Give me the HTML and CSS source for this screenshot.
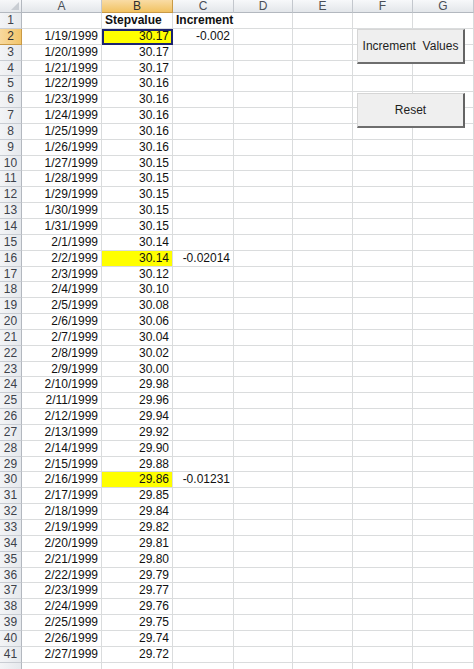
FILE: index.html
```html
<!DOCTYPE html>
<html>
<head>
<meta charset="utf-8">
<link rel="stylesheet" href="styles.css">
</head>
<body>
<div class="sheet">
  <div class="row head">
    <div class="corner"><svg width="8" height="8" viewBox="0 0 8 8"><polygon points="8,0 8,8 0,8" fill="#c9cdd3"/></svg></div>
    <div class="ch">A</div><div class="ch selh">B</div><div class="ch">C</div><div class="ch">D</div><div class="ch">E</div><div class="ch">F</div><div class="ch">G</div>
  </div>
  <div class="row"><div class="rh">1</div><div class="c"></div><div class="c bold">Stepvalue</div><div class="c bold over">Increment</div><div class="c"></div><div class="c"></div><div class="c"></div><div class="c"></div></div>
  <div class="row"><div class="rh selh">2</div><div class="c n">1/19/1999</div><div class="c n yel sel">30.17</div><div class="c n">-0.002</div><div class="c"></div><div class="c"></div><div class="c"></div><div class="c"></div></div>
  <div class="row"><div class="rh">3</div><div class="c n">1/20/1999</div><div class="c n">30.17</div><div class="c"></div><div class="c"></div><div class="c"></div><div class="c"></div><div class="c"></div></div>
  <div class="row"><div class="rh">4</div><div class="c n">1/21/1999</div><div class="c n">30.17</div><div class="c"></div><div class="c"></div><div class="c"></div><div class="c"></div><div class="c"></div></div>
  <div class="row"><div class="rh">5</div><div class="c n">1/22/1999</div><div class="c n">30.16</div><div class="c"></div><div class="c"></div><div class="c"></div><div class="c"></div><div class="c"></div></div>
  <div class="row"><div class="rh">6</div><div class="c n">1/23/1999</div><div class="c n">30.16</div><div class="c"></div><div class="c"></div><div class="c"></div><div class="c"></div><div class="c"></div></div>
  <div class="row"><div class="rh">7</div><div class="c n">1/24/1999</div><div class="c n">30.16</div><div class="c"></div><div class="c"></div><div class="c"></div><div class="c"></div><div class="c"></div></div>
  <div class="row"><div class="rh">8</div><div class="c n">1/25/1999</div><div class="c n">30.16</div><div class="c"></div><div class="c"></div><div class="c"></div><div class="c"></div><div class="c"></div></div>
  <div class="row"><div class="rh">9</div><div class="c n">1/26/1999</div><div class="c n">30.16</div><div class="c"></div><div class="c"></div><div class="c"></div><div class="c"></div><div class="c"></div></div>
  <div class="row"><div class="rh">10</div><div class="c n">1/27/1999</div><div class="c n">30.15</div><div class="c"></div><div class="c"></div><div class="c"></div><div class="c"></div><div class="c"></div></div>
  <div class="row"><div class="rh">11</div><div class="c n">1/28/1999</div><div class="c n">30.15</div><div class="c"></div><div class="c"></div><div class="c"></div><div class="c"></div><div class="c"></div></div>
  <div class="row"><div class="rh">12</div><div class="c n">1/29/1999</div><div class="c n">30.15</div><div class="c"></div><div class="c"></div><div class="c"></div><div class="c"></div><div class="c"></div></div>
  <div class="row"><div class="rh">13</div><div class="c n">1/30/1999</div><div class="c n">30.15</div><div class="c"></div><div class="c"></div><div class="c"></div><div class="c"></div><div class="c"></div></div>
  <div class="row"><div class="rh">14</div><div class="c n">1/31/1999</div><div class="c n">30.15</div><div class="c"></div><div class="c"></div><div class="c"></div><div class="c"></div><div class="c"></div></div>
  <div class="row"><div class="rh">15</div><div class="c n">2/1/1999</div><div class="c n">30.14</div><div class="c"></div><div class="c"></div><div class="c"></div><div class="c"></div><div class="c"></div></div>
  <div class="row"><div class="rh">16</div><div class="c n">2/2/1999</div><div class="c n yel">30.14</div><div class="c n">-0.02014</div><div class="c"></div><div class="c"></div><div class="c"></div><div class="c"></div></div>
  <div class="row"><div class="rh">17</div><div class="c n">2/3/1999</div><div class="c n">30.12</div><div class="c"></div><div class="c"></div><div class="c"></div><div class="c"></div><div class="c"></div></div>
  <div class="row"><div class="rh">18</div><div class="c n">2/4/1999</div><div class="c n">30.10</div><div class="c"></div><div class="c"></div><div class="c"></div><div class="c"></div><div class="c"></div></div>
  <div class="row"><div class="rh">19</div><div class="c n">2/5/1999</div><div class="c n">30.08</div><div class="c"></div><div class="c"></div><div class="c"></div><div class="c"></div><div class="c"></div></div>
  <div class="row"><div class="rh">20</div><div class="c n">2/6/1999</div><div class="c n">30.06</div><div class="c"></div><div class="c"></div><div class="c"></div><div class="c"></div><div class="c"></div></div>
  <div class="row"><div class="rh">21</div><div class="c n">2/7/1999</div><div class="c n">30.04</div><div class="c"></div><div class="c"></div><div class="c"></div><div class="c"></div><div class="c"></div></div>
  <div class="row"><div class="rh">22</div><div class="c n">2/8/1999</div><div class="c n">30.02</div><div class="c"></div><div class="c"></div><div class="c"></div><div class="c"></div><div class="c"></div></div>
  <div class="row"><div class="rh">23</div><div class="c n">2/9/1999</div><div class="c n">30.00</div><div class="c"></div><div class="c"></div><div class="c"></div><div class="c"></div><div class="c"></div></div>
  <div class="row"><div class="rh">24</div><div class="c n">2/10/1999</div><div class="c n">29.98</div><div class="c"></div><div class="c"></div><div class="c"></div><div class="c"></div><div class="c"></div></div>
  <div class="row"><div class="rh">25</div><div class="c n">2/11/1999</div><div class="c n">29.96</div><div class="c"></div><div class="c"></div><div class="c"></div><div class="c"></div><div class="c"></div></div>
  <div class="row"><div class="rh">26</div><div class="c n">2/12/1999</div><div class="c n">29.94</div><div class="c"></div><div class="c"></div><div class="c"></div><div class="c"></div><div class="c"></div></div>
  <div class="row"><div class="rh">27</div><div class="c n">2/13/1999</div><div class="c n">29.92</div><div class="c"></div><div class="c"></div><div class="c"></div><div class="c"></div><div class="c"></div></div>
  <div class="row"><div class="rh">28</div><div class="c n">2/14/1999</div><div class="c n">29.90</div><div class="c"></div><div class="c"></div><div class="c"></div><div class="c"></div><div class="c"></div></div>
  <div class="row"><div class="rh">29</div><div class="c n">2/15/1999</div><div class="c n">29.88</div><div class="c"></div><div class="c"></div><div class="c"></div><div class="c"></div><div class="c"></div></div>
  <div class="row"><div class="rh">30</div><div class="c n">2/16/1999</div><div class="c n yel">29.86</div><div class="c n">-0.01231</div><div class="c"></div><div class="c"></div><div class="c"></div><div class="c"></div></div>
  <div class="row"><div class="rh">31</div><div class="c n">2/17/1999</div><div class="c n">29.85</div><div class="c"></div><div class="c"></div><div class="c"></div><div class="c"></div><div class="c"></div></div>
  <div class="row"><div class="rh">32</div><div class="c n">2/18/1999</div><div class="c n">29.84</div><div class="c"></div><div class="c"></div><div class="c"></div><div class="c"></div><div class="c"></div></div>
  <div class="row"><div class="rh">33</div><div class="c n">2/19/1999</div><div class="c n">29.82</div><div class="c"></div><div class="c"></div><div class="c"></div><div class="c"></div><div class="c"></div></div>
  <div class="row"><div class="rh">34</div><div class="c n">2/20/1999</div><div class="c n">29.81</div><div class="c"></div><div class="c"></div><div class="c"></div><div class="c"></div><div class="c"></div></div>
  <div class="row"><div class="rh">35</div><div class="c n">2/21/1999</div><div class="c n">29.80</div><div class="c"></div><div class="c"></div><div class="c"></div><div class="c"></div><div class="c"></div></div>
  <div class="row"><div class="rh">36</div><div class="c n">2/22/1999</div><div class="c n">29.79</div><div class="c"></div><div class="c"></div><div class="c"></div><div class="c"></div><div class="c"></div></div>
  <div class="row"><div class="rh">37</div><div class="c n">2/23/1999</div><div class="c n">29.77</div><div class="c"></div><div class="c"></div><div class="c"></div><div class="c"></div><div class="c"></div></div>
  <div class="row"><div class="rh">38</div><div class="c n">2/24/1999</div><div class="c n">29.76</div><div class="c"></div><div class="c"></div><div class="c"></div><div class="c"></div><div class="c"></div></div>
  <div class="row"><div class="rh">39</div><div class="c n">2/25/1999</div><div class="c n">29.75</div><div class="c"></div><div class="c"></div><div class="c"></div><div class="c"></div><div class="c"></div></div>
  <div class="row"><div class="rh">40</div><div class="c n">2/26/1999</div><div class="c n">29.74</div><div class="c"></div><div class="c"></div><div class="c"></div><div class="c"></div><div class="c"></div></div>
  <div class="row"><div class="rh">41</div><div class="c n">2/27/1999</div><div class="c n">29.72</div><div class="c"></div><div class="c"></div><div class="c"></div><div class="c"></div><div class="c"></div></div>
  <div class="row"><div class="rh"></div><div class="c"></div><div class="c"></div><div class="c"></div><div class="c"></div><div class="c"></div><div class="c"></div><div class="c"></div></div>

  <div class="btn btn-inc">Increment&nbsp; Values</div>
  <div class="btn btn-reset">Reset</div>
</div>
</body>
</html>
```
FILE: styles.css
```css
html, body {
  margin: 0;
  padding: 0;
  background: #ffffff;
  overflow: hidden;
}
.sheet {
  position: relative;
  width: 474px;
  height: 669px;
  overflow: hidden;
  font-family: "Liberation Sans", Arial, sans-serif;
  font-size: 12px;
  color: #111;
}
.row {
  display: grid;
  grid-template-columns: 22px 80px 71px 61px 59px 60px 60px 61px;
  height: 15.85px;
}
.row.head {
  height: 13px;
}
.row > div {
  box-sizing: border-box;
  border-right: 1px solid #dadcdd;
  border-bottom: 1px solid #dadcdd;
  white-space: nowrap;
  line-height: 15px;
  overflow: hidden;
}
.corner {
  background: linear-gradient(#f6f7f9, #e4e7eb);
  display: flex;
  align-items: flex-end;
  justify-content: flex-end;
  padding: 0 2px 2px 0;
}
.row > .corner {
  border-right: 1px solid #b3b8bf;
  border-bottom: 1px solid #b3b8bf;
}
.corner svg {
  display: block;
}
.row > .ch {
  background: linear-gradient(#f7f8fa, #e3e6ea);
  border-right: 1px solid #c3c7cd;
  border-bottom: 1px solid #b3b8bf;
  text-align: center;
  color: #4a4f57;
  font-size: 12px;
  line-height: 12px;
}
.row > .rh {
  background: linear-gradient(90deg, #f3f4f6, #e6e9ed);
  border-right: 1px solid #b3b8bf;
  border-bottom: 1px solid #c9cdd3;
  text-align: center;
  color: #3d424a;
  font-size: 12px;
}
.row > .selh {
  background: linear-gradient(#f9dca5, #f1c262);
  border-right-color: #c99a46;
  border-bottom-color: #c99a46;
  color: #2f2f2f;
}
.row > .rh.selh {
  background: linear-gradient(90deg, #f8d99e, #f2c56a);
}
.c {
  padding: 0 3px;
}
.n {
  text-align: right;
}
.bold {
  font-weight: bold;
}
.row > .over {
  overflow: visible;
  border-right-color: transparent;
}
.yel {
  background: #ffff00;
}
.sel {
  outline: 2px solid #1c2470;
  outline-offset: -2px;
}
.btn {
  position: absolute;
  left: 357px;
  width: 108px;
  height: 35px;
  box-sizing: border-box;
  background: #efefef;
  border-top: 1px solid #d6d6d6;
  border-left: 1px solid #d6d6d6;
  border-right: 2px solid #646464;
  border-bottom: 2px solid #6e6e6e;
  display: flex;
  align-items: center;
  justify-content: center;
  font-size: 12px;
  color: #1e1e1e;
  white-space: nowrap;
}
.btn-inc {
  top: 29px;
}
.btn-reset {
  top: 93px;
}
```
